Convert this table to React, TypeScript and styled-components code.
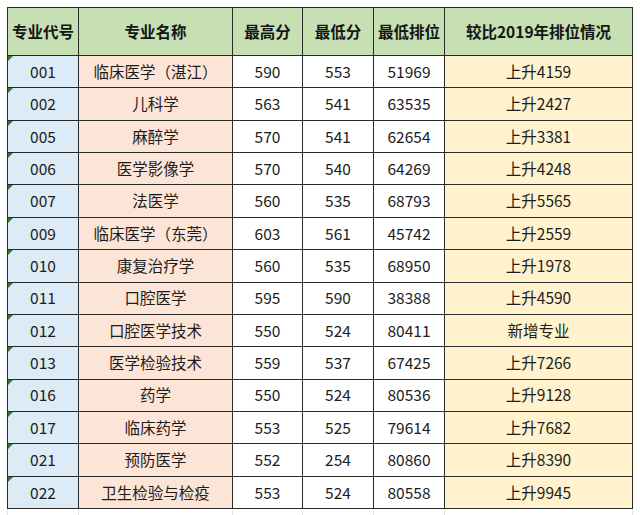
import React from "react";
import styled, { createGlobalStyle } from "styled-components";

const Global = createGlobalStyle`
  html, body { margin: 0; padding: 0; background: #ffffff; }
  body { font-family: "Noto Sans CJK SC", "Noto Sans", sans-serif; }
`;

const Page = styled.div`
  padding: 7px 0 0 7px;
  width: 640px;
  height: 515px;
  box-sizing: border-box;
  overflow: hidden;
`;

const cols = "70px 153px 69px 70px 70px 187px";

const Grid = styled.div`
  display: grid;
  grid-template-columns: ${cols};
  grid-template-rows: 47px repeat(14, 1fr);
  gap: 1px;
  padding: 1px;
  width: 626px;
  height: 502px;
  box-sizing: border-box;
  background: #2a2a2a;
`;

const Trail = styled.div`
  display: grid;
  grid-template-columns: ${cols};
  gap: 1px;
  padding: 0 1px;
  width: 626px;
  height: 8px;
  box-sizing: border-box;
  background: #e4e4e4;
`;

const TrailCell = styled.div`
  background: #ffffff;
`;

type Tone = "head" | "blue" | "peach" | "white" | "yellow";

const bg: Record<Tone, string> = {
  head: "#c6e0b4",
  blue: "#ddebf7",
  peach: "#fce4d6",
  white: "#ffffff",
  yellow: "#fff2cc",
};

const Cell = styled.div<{ $tone: Tone }>`
  position: relative;
  display: flex;
  align-items: center;
  justify-content: center;
  background: ${(p) => bg[p.$tone]};
  color: ${(p) => (p.$tone === "head" ? "#151515" : "#1c1c1c")};
  font-size: 15.5px;
  font-weight: ${(p) => (p.$tone === "head" ? 700 : 400)};
  white-space: nowrap;
  line-height: 1;
`;

const Flag = styled.span`
  position: absolute;
  left: 0;
  top: 0;
  width: 0;
  height: 0;
  border-top: 5px solid #2e7d32;
  border-right: 5px solid transparent;
`;

const headers = ["专业代号", "专业名称", "最高分", "最低分", "最低排位", "较比2019年排位情况"];

const rows: [string, string, string, string, string, string][] = [
  ["001", "临床医学（湛江）", "590", "553", "51969", "上升4159"],
  ["002", "儿科学", "563", "541", "63535", "上升2427"],
  ["005", "麻醉学", "570", "541", "62654", "上升3381"],
  ["006", "医学影像学", "570", "540", "64269", "上升4248"],
  ["007", "法医学", "560", "535", "68793", "上升5565"],
  ["009", "临床医学（东莞）", "603", "561", "45742", "上升2559"],
  ["010", "康复治疗学", "560", "535", "68950", "上升1978"],
  ["011", "口腔医学", "595", "590", "38388", "上升4590"],
  ["012", "口腔医学技术", "550", "524", "80411", "新增专业"],
  ["013", "医学检验技术", "559", "537", "67425", "上升7266"],
  ["016", "药学", "550", "524", "80536", "上升9128"],
  ["017", "临床药学", "553", "525", "79614", "上升7682"],
  ["021", "预防医学", "552", "254", "80860", "上升8390"],
  ["022", "卫生检验与检疫", "553", "524", "80558", "上升9945"],
];

const tones: Tone[] = ["blue", "peach", "white", "white", "white", "yellow"];

export default function App() {
  return (
    <>
      <Global />
      <Page>
        <Grid>
          {headers.map((h) => (
            <Cell key={h} $tone="head">
              {h}
            </Cell>
          ))}
          {rows.map((r) =>
            r.map((v, i) => (
              <Cell key={r[0] + "-" + i} $tone={tones[i]}>
                {i === 0 && <Flag />}
                {v}
              </Cell>
            ))
          )}
        </Grid>
        <Trail>
          {tones.map((t, i) => (
            <TrailCell key={i} />
          ))}
        </Trail>
      </Page>
    </>
  );
}
